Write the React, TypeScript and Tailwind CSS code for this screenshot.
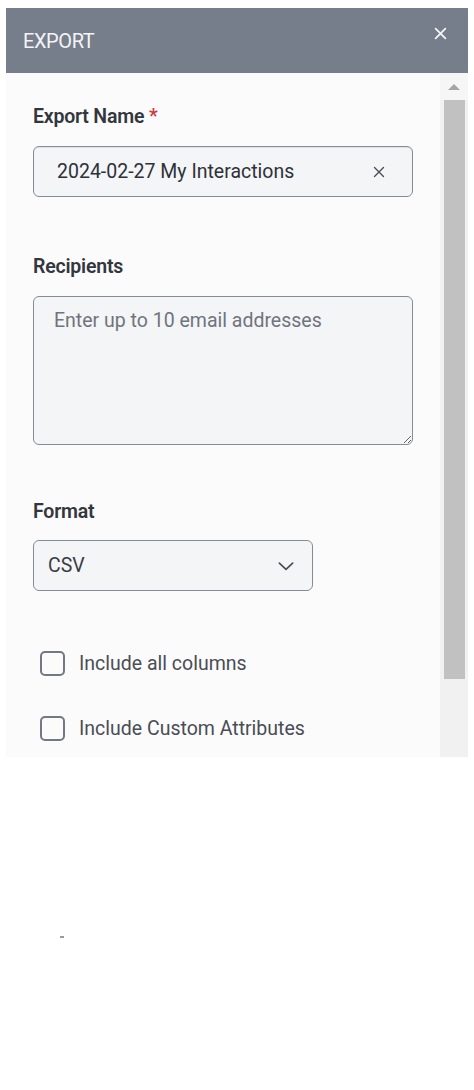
import React, { useState } from 'react';

const font = { fontFamily: 'Roboto, "Liberation Sans", sans-serif' };

const XIcon: React.FC<{ size: number; color: string; width?: number }> = ({ size, color, width = 2 }) => (
  <svg width={size} height={size} viewBox="0 0 16 16" fill="none" stroke={color} strokeWidth={width} strokeLinecap="round">
    <path d="M2 2l12 12M14 2L2 14" />
  </svg>
);

const Checkbox: React.FC<{ label: string; className?: string }> = ({ label, className }) => (
  <label className={`flex items-center ${className ?? ''}`}>
    <span className="w-[25px] h-[25px] rounded-[5px] border-2 border-[#737883] bg-[#fbfbfb]" />
    <span className="ml-[14px] text-[19.5px] leading-6 text-[#4a4d55]">{label}</span>
  </label>
);

export default function App() {
  const [name, setName] = useState('2024-02-27 My Interactions');

  return (
    <div className="w-[474px] h-[1090px] bg-white relative" style={font}>
      <div className="ml-[6px] pt-[8px] w-[462px]">
        <div className="h-[65px] bg-[#767d8b] flex items-center justify-between pl-[17px] pr-[21px]">
          <span className="text-[20px] tracking-[-0.4px] text-[#f3f4f6]">EXPORT</span>
          <span className="-mt-[14px]">
            <XIcon size={13} color="#f3f4f6" width={2.2} />
          </span>
        </div>
        <div className="h-[684px] flex bg-[#fbfbfb]">
          <div className="flex-1 pl-[27px] pr-[27px] pt-[32px]">
            <div className="text-[19.5px] leading-6 font-semibold tracking-[-0.2px] text-[#33363d]">
              Export Name <span className="text-[#d23a3a]">*</span>
            </div>
            <div className="mt-[17px] h-[51px] w-[380px] rounded-[6px] border border-[#868b95] bg-[#f4f5f7] flex items-center pl-[23px] pr-[27px] shadow-[inset_0_1px_1px_rgba(0,0,0,0.08)]">
              <input
                value={name}
                onChange={(e) => setName(e.target.value)}
                className="flex-1 min-w-0 bg-transparent outline-none text-[19.5px] text-[#2e3138]"
              />
              <XIcon size={12} color="#4a4d55" width={1.8} />
            </div>

            <div className="mt-[58px] text-[19.5px] leading-6 font-semibold tracking-[-0.2px] text-[#33363d]">Recipients</div>
            <textarea
              placeholder="Enter up to 10 email addresses"
              className="mt-[17px] block h-[149px] w-[380px] rounded-[6px] border border-[#868b95] bg-[#f4f5f7] pl-[20px] pt-[12px] text-[19.5px] leading-6 text-[#2e3138] placeholder:text-[#70747c] outline-none"
            />

            <div className="mt-[55px] text-[19.5px] leading-6 font-semibold tracking-[-0.2px] text-[#33363d]">Format</div>
            <div className="mt-[16px] h-[51px] w-[280px] rounded-[6px] border border-[#868b95] bg-[#f4f5f7] flex items-center justify-between pl-[14px] pr-[16px]">
              <span className="text-[19.5px] text-[#3a3d44]">CSV</span>
              <svg width="20" height="20" viewBox="0 0 24 24" fill="none" stroke="#4a4d55" strokeWidth="2" strokeLinecap="round" strokeLinejoin="round">
                <path d="M4 8.5l8 7.5 8-7.5" />
              </svg>
            </div>

            <Checkbox label="Include all columns" className="mt-[60px] ml-[7px]" />
            <Checkbox label="Include Custom Attributes" className="mt-[40px] ml-[7px]" />
          </div>
          <div className="w-[28px] bg-[#f1f1f1] flex flex-col items-center">
            <div className="h-[27px] w-full bg-[#f6f6f6] flex items-center justify-center">
              <span className="w-0 h-0 border-l-[6px] border-r-[6px] border-b-[6px] border-l-transparent border-r-transparent border-b-[#a5a5a5]" />
            </div>
            <div className="w-[21px] h-[579px] bg-[#c1c1c1]" />
          </div>
        </div>
      </div>
      <div className="absolute left-[60px] top-[936px] w-[4px] h-[2px] bg-[#9a9a9a]" />
    </div>
  );
}
